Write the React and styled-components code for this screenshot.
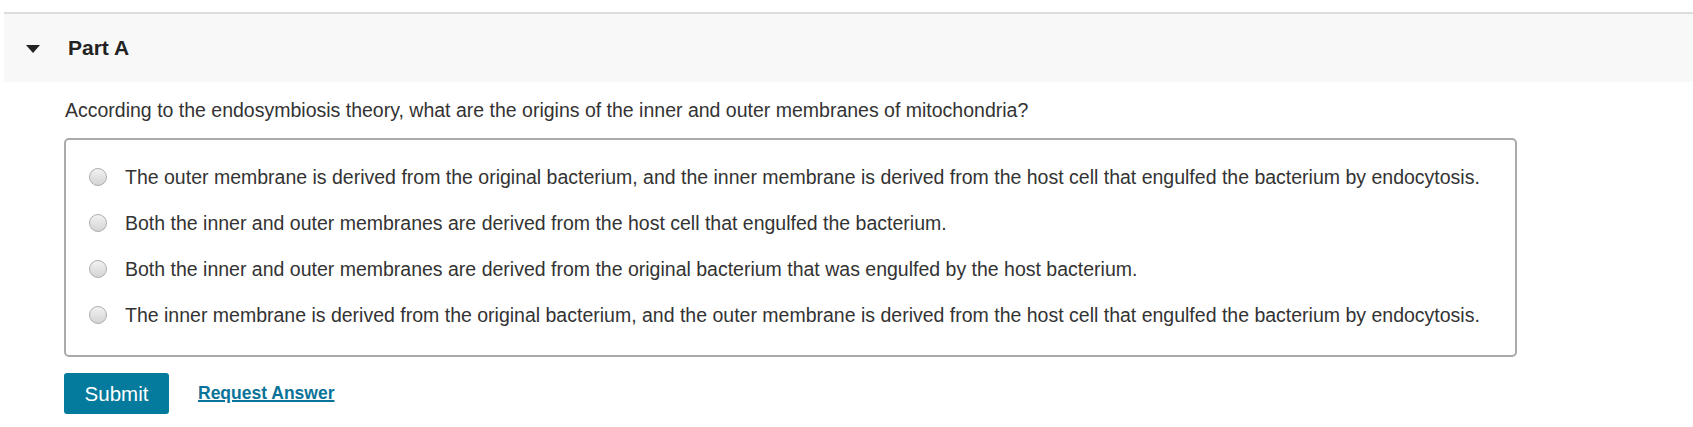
import React from 'react'
import styled, {createGlobalStyle} from 'styled-components'

const GlobalStyle = createGlobalStyle`
    body {
        margin : 0;
        background : #fff;
        font-family : "Liberation Sans", Arial, sans-serif;
        color : #333;
    }
`

const Page = styled.div`
    padding-top : 12px;
`

const PartHeader = styled.div`
    margin-left : 4px;
    height : 68px;
    border-top : 2px solid #ddd;
    background : #f8f8f8;
    display : flex;
    align-items : center;
    padding-left : 22px;
`

const Caret = styled.span`
    width : 0;
    height : 0;
    border-left : 7px solid transparent;
    border-right : 7px solid transparent;
    border-top : 8px solid #222;
    margin-right : 28px;
    margin-top : 1px;
`

const PartTitle = styled.h2`
    margin : 0;
    font-size : 21px;
    font-weight : bold;
    color : #222;
`

const Body = styled.div`
    padding : 17px 0 0 64px;
`

const Question = styled.p`
    margin : 0 0 17px 1px;
    font-size : 19.5px;
    line-height : 22px;
`

const Choices = styled.div`
    width : 1453px;
    box-sizing : border-box;
    border : 2px solid #aaa;
    border-radius : 5px;
    padding : 14px 0 17px;
`

const Choice = styled.label`
    display : flex;
    align-items : center;
    height : 46px;
    padding-left : 23px;
    font-size : 19.5px;
`

const Radio = styled.span`
    flex : none;
    width : 16px;
    height : 16px;
    border-radius : 50%;
    border : 1px solid #aeaeae;
    background : linear-gradient(#f2f2f2, #d4d4d4);
    margin-right : 18px;
`

const Actions = styled.div`
    display : flex;
    align-items : center;
    margin-top : 16px;
`

const SubmitButton = styled.button`
    width : 105px;
    height : 41px;
    border : none;
    border-radius : 3px;
    background : #047a9c;
    color : #fff;
    font-family : inherit;
    font-size : 20.5px;
    padding : 0;
`

const RequestLink = styled.a`
    margin-left : 29px;
    color : #0a7399;
    font-size : 17.5px;
    font-weight : bold;
    text-decoration : underline;
    text-decoration-thickness : 2px;
    cursor : pointer;
`

const options = [
    'The outer membrane is derived from the original bacterium, and the inner membrane is derived from the host cell that engulfed the bacterium by endocytosis.',
    'Both the inner and outer membranes are derived from the host cell that engulfed the bacterium.',
    'Both the inner and outer membranes are derived from the original bacterium that was engulfed by the host bacterium.',
    'The inner membrane is derived from the original bacterium, and the outer membrane is derived from the host cell that engulfed the bacterium by endocytosis.'
]

const App = () => (
    <Page>
        <GlobalStyle/>
        <PartHeader>
            <Caret/>
            <PartTitle>Part A</PartTitle>
        </PartHeader>
        <Body>
            <Question>
                According to the endosymbiosis theory, what are the origins of the inner and outer membranes of mitochondria?
            </Question>
            <Choices>
                {options.map(text => (
                    <Choice key={text}>
                        <Radio/>
                        {text}
                    </Choice>
                ))}
            </Choices>
            <Actions>
                <SubmitButton>Submit</SubmitButton>
                <RequestLink>Request Answer</RequestLink>
            </Actions>
        </Body>
    </Page>
)

export default App
